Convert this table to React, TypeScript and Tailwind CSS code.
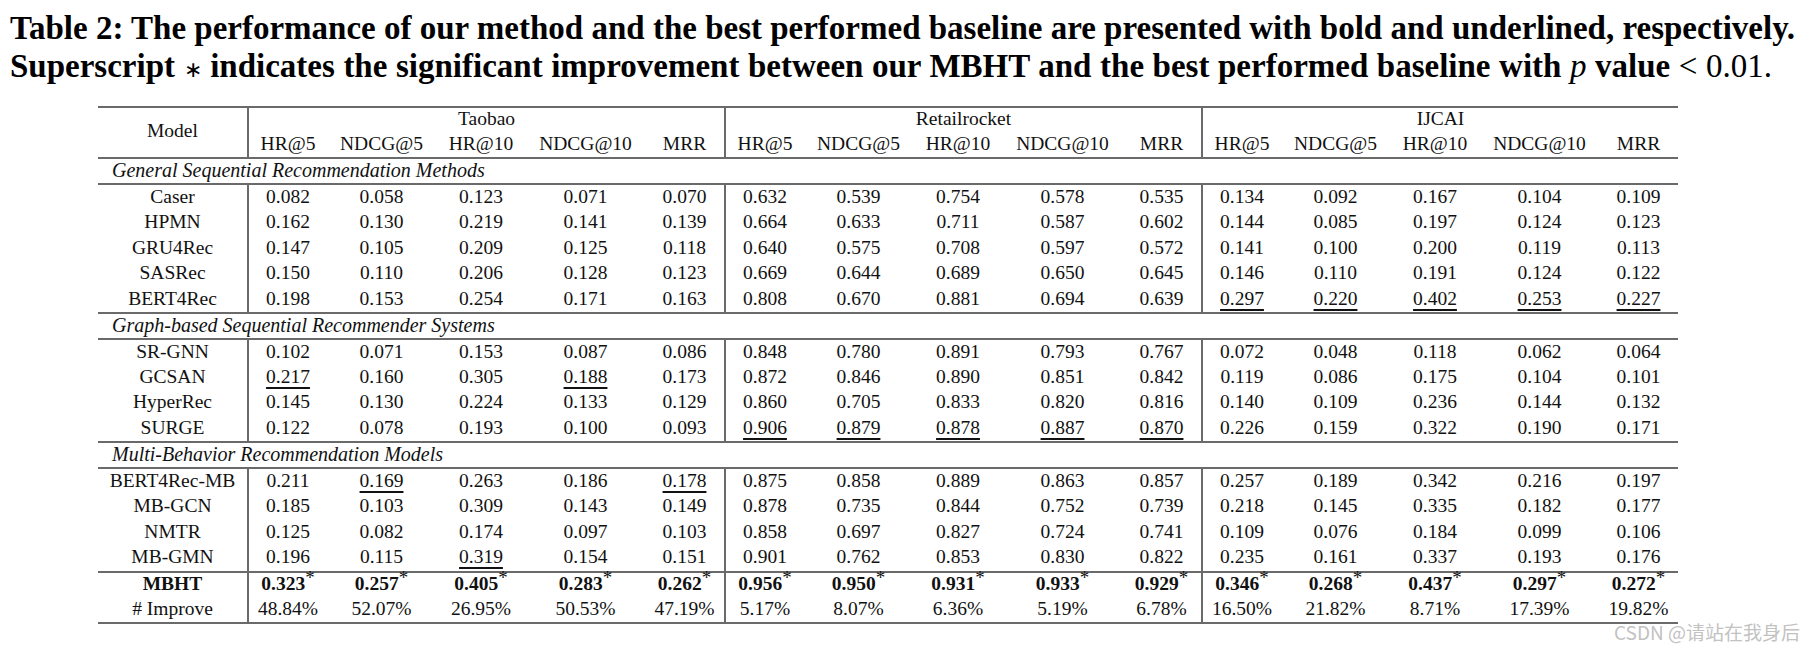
import React from "react";

// ── Table data ──────────────────────────────────────────────────────────────
// A leading "_" marks an underlined value (best baseline).

const datasets = ["Taobao", "Retailrocket", "IJCAI"];
const metrics = ["HR@5", "NDCG@5", "HR@10", "NDCG@10", "MRR"];

type Row = { name: string; vals: string[] };

const general: Row[] = [
  { name: "Caser", vals: "0.082 0.058 0.123 0.071 0.070 0.632 0.539 0.754 0.578 0.535 0.134 0.092 0.167 0.104 0.109".split(" ") },
  { name: "HPMN", vals: "0.162 0.130 0.219 0.141 0.139 0.664 0.633 0.711 0.587 0.602 0.144 0.085 0.197 0.124 0.123".split(" ") },
  { name: "GRU4Rec", vals: "0.147 0.105 0.209 0.125 0.118 0.640 0.575 0.708 0.597 0.572 0.141 0.100 0.200 0.119 0.113".split(" ") },
  { name: "SASRec", vals: "0.150 0.110 0.206 0.128 0.123 0.669 0.644 0.689 0.650 0.645 0.146 0.110 0.191 0.124 0.122".split(" ") },
  { name: "BERT4Rec", vals: "0.198 0.153 0.254 0.171 0.163 0.808 0.670 0.881 0.694 0.639 _0.297 _0.220 _0.402 _0.253 _0.227".split(" ") },
];

const graph: Row[] = [
  { name: "SR-GNN", vals: "0.102 0.071 0.153 0.087 0.086 0.848 0.780 0.891 0.793 0.767 0.072 0.048 0.118 0.062 0.064".split(" ") },
  { name: "GCSAN", vals: "_0.217 0.160 0.305 _0.188 0.173 0.872 0.846 0.890 0.851 0.842 0.119 0.086 0.175 0.104 0.101".split(" ") },
  { name: "HyperRec", vals: "0.145 0.130 0.224 0.133 0.129 0.860 0.705 0.833 0.820 0.816 0.140 0.109 0.236 0.144 0.132".split(" ") },
  { name: "SURGE", vals: "0.122 0.078 0.193 0.100 0.093 _0.906 _0.879 _0.878 _0.887 _0.870 0.226 0.159 0.322 0.190 0.171".split(" ") },
];

const multi: Row[] = [
  { name: "BERT4Rec-MB", vals: "0.211 _0.169 0.263 0.186 _0.178 0.875 0.858 0.889 0.863 0.857 0.257 0.189 0.342 0.216 0.197".split(" ") },
  { name: "MB-GCN", vals: "0.185 0.103 0.309 0.143 0.149 0.878 0.735 0.844 0.752 0.739 0.218 0.145 0.335 0.182 0.177".split(" ") },
  { name: "NMTR", vals: "0.125 0.082 0.174 0.097 0.103 0.858 0.697 0.827 0.724 0.741 0.109 0.076 0.184 0.099 0.106".split(" ") },
  { name: "MB-GMN", vals: "0.196 0.115 _0.319 0.154 0.151 0.901 0.762 0.853 0.830 0.822 0.235 0.161 0.337 0.193 0.176".split(" ") },
];

const ours = "0.323 0.257 0.405 0.283 0.262 0.956 0.950 0.931 0.933 0.929 0.346 0.268 0.437 0.297 0.272".split(" ");
const improve = "48.84% 52.07% 26.95% 50.53% 47.19% 5.17% 8.07% 6.36% 5.19% 6.78% 16.50% 21.82% 8.71% 17.39% 19.82%".split(" ");

// ── Pieces ──────────────────────────────────────────────────────────────────

const grid = "grid grid-cols-[149px_repeat(3,80px_109px_90px_119px_79px)]";

function Rule() {
  return <div className="h-[2px] bg-[#6a6a6a]" />;
}

function Cell({ i, children }: { i: number; children: React.ReactNode }) {
  return (
    <div
      className={
        "flex items-center justify-center pb-[2px] " +
        (i % 5 === 0 ? "border-l-2 border-[#6a6a6a]" : "")
      }
    >
      {children}
    </div>
  );
}

function Value({ v }: { v: string }) {
  if (v.startsWith("_")) {
    return (
      <span className="underline decoration-[1.5px] underline-offset-[4px]">
        {v.slice(1)}
      </span>
    );
  }
  return <span>{v}</span>;
}

function DataRow({ row, h }: { row: Row; h: string }) {
  return (
    <div className={grid + " " + h}>
      <div className="flex items-center justify-center pb-[2px]">{row.name}</div>
      {row.vals.map((v, i) => (
        <Cell key={i} i={i}>
          <Value v={v} />
        </Cell>
      ))}
    </div>
  );
}

function Category({ title }: { title: string }) {
  return (
    <div className="flex h-[24px] items-center pb-[2px] pl-[14px] text-[20px] italic">
      {title}
    </div>
  );
}

// ── Page ────────────────────────────────────────────────────────────────────

export default function App() {
  return (
    <div className="relative h-[649px] w-[1817px] overflow-hidden bg-white text-black">
      {/* Caption */}
      <div className="h-[106px] pl-[10px] pt-[9px] font-['Liberation_Serif',serif] text-[33px] font-bold leading-[38px]">
        <div className="w-[1768px] whitespace-nowrap text-justify [text-align-last:justify]">
          Table 2: The performance of our method and the best performed baseline are presented with bold and underlined, respectively.
        </div>
        <div className="w-[1762px] whitespace-nowrap text-justify [text-align-last:justify]">
          Superscript <span className="text-[22px] font-normal">∗</span> indicates the significant improvement between our MBHT and the best performed baseline with{" "}
          <span className="font-normal italic">p</span> value <span className="font-normal">&lt; 0.01.</span>
        </div>
      </div>

      {/* Table */}
      <div className="ml-[98px] w-[1580px] font-['Liberation_Serif',serif] text-[19.5px] leading-none text-[#111]">
        <Rule />
        <div className={grid + " grid-rows-[24.5px_24.5px]"}>
          <div className="row-span-2 flex items-center justify-center pb-[3px]">Model</div>
          {datasets.map((d) => (
            <div key={d} className="col-span-5 flex items-center justify-center border-l-2 border-[#6a6a6a] pb-[3px]">
              {d}
            </div>
          ))}
          {datasets.flatMap((d) =>
            metrics.map((m, i) => (
              <Cell key={d + m} i={i}>
                {m}
              </Cell>
            )),
          )}
        </div>
        <Rule />
        <Category title="General Sequential Recommendation Methods" />
        <Rule />
        {general.map((r) => (
          <DataRow key={r.name} row={r} h="h-[25.4px]" />
        ))}
        <Rule />
        <Category title="Graph-based Sequential Recommender Systems" />
        <Rule />
        {graph.map((r) => (
          <DataRow key={r.name} row={r} h="h-[25.25px]" />
        ))}
        <Rule />
        <Category title="Multi-Behavior Recommendation Models" />
        <Rule />
        {multi.map((r) => (
          <DataRow key={r.name} row={r} h="h-[25.5px]" />
        ))}
        <Rule />
        <div className={grid + " h-[24.5px]"}>
          <div className="flex items-center justify-center pb-[2px] font-bold">MBHT</div>
          {ours.map((v, i) => (
            <Cell key={i} i={i}>
              <span className="font-bold">{v}</span>
              <sup className="-top-[0.35em] text-[19px] font-normal">*</sup>
            </Cell>
          ))}
        </div>
        <div className={grid + " h-[24.5px]"}>
          <div className="flex items-center justify-center pb-[2px]"># Improve</div>
          {improve.map((v, i) => (
            <Cell key={i} i={i}>
              {v}
            </Cell>
          ))}
        </div>
        <Rule />
      </div>

      {/* Watermark */}
      <div className="absolute left-[1614px] top-[622px] font-['Noto_Sans_CJK_SC','Noto_Sans',sans-serif] text-[19px] leading-none text-[#c2c2c2]">
        CSDN @请站在我身后
      </div>
    </div>
  );
}
